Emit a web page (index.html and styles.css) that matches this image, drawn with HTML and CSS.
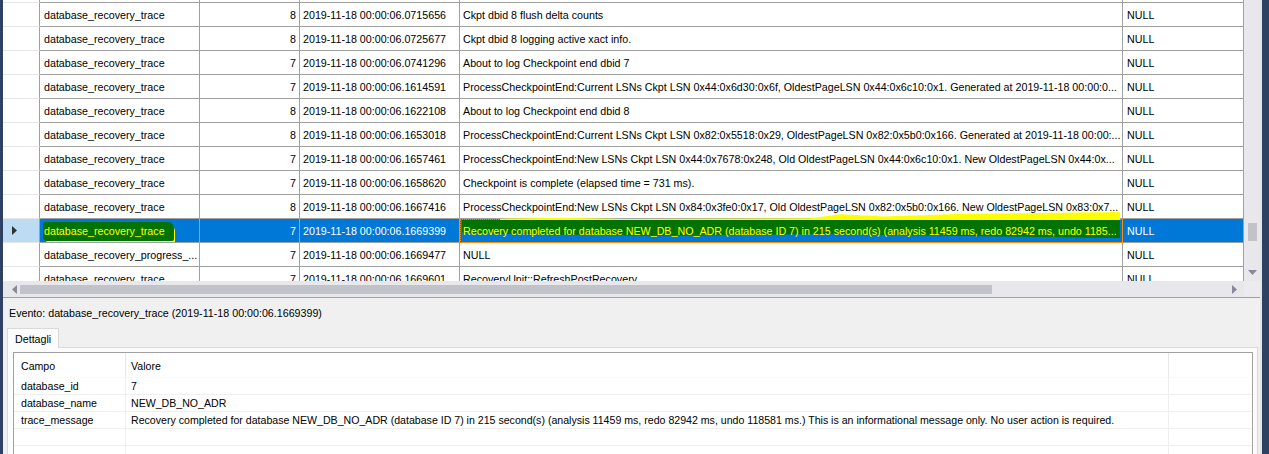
FILE: index.html
```html
<!DOCTYPE html>
<html>
<head>
<meta charset="utf-8">
<link rel="stylesheet" href="styles.css">
</head>
<body>
<div class="screen">
  <div class="edge-l"></div>
  <div class="main">
    <div class="grid-wrap">
      <div class="grid">
        <div class="rows">
          <div class="row"><div class="c rh"></div><div class="c name"></div><div class="c num"></div><div class="c ts"></div><div class="c msg"></div><div class="c nul"></div></div>
          <div class="row"><div class="c rh"></div><div class="c name">database_recovery_trace</div><div class="c num">8</div><div class="c ts">2019-11-18 00:00:06.0715656</div><div class="c msg">Ckpt dbid 8 flush delta counts</div><div class="c nul">NULL</div></div>
          <div class="row"><div class="c rh"></div><div class="c name">database_recovery_trace</div><div class="c num">8</div><div class="c ts">2019-11-18 00:00:06.0725677</div><div class="c msg">Ckpt dbid 8 logging active xact info.</div><div class="c nul">NULL</div></div>
          <div class="row"><div class="c rh"></div><div class="c name">database_recovery_trace</div><div class="c num">7</div><div class="c ts">2019-11-18 00:00:06.0741296</div><div class="c msg">About to log Checkpoint end dbid 7</div><div class="c nul">NULL</div></div>
          <div class="row"><div class="c rh"></div><div class="c name">database_recovery_trace</div><div class="c num">7</div><div class="c ts">2019-11-18 00:00:06.1614591</div><div class="c msg">ProcessCheckpointEnd:Current LSNs Ckpt LSN 0x44:0x6d30:0x6f, OldestPageLSN 0x44:0x6c10:0x1. Generated at 2019-11-18 00:00:0...</div><div class="c nul">NULL</div></div>
          <div class="row"><div class="c rh"></div><div class="c name">database_recovery_trace</div><div class="c num">8</div><div class="c ts">2019-11-18 00:00:06.1622108</div><div class="c msg">About to log Checkpoint end dbid 8</div><div class="c nul">NULL</div></div>
          <div class="row"><div class="c rh"></div><div class="c name">database_recovery_trace</div><div class="c num">8</div><div class="c ts">2019-11-18 00:00:06.1653018</div><div class="c msg">ProcessCheckpointEnd:Current LSNs Ckpt LSN 0x82:0x5518:0x29, OldestPageLSN 0x82:0x5b0:0x166. Generated at 2019-11-18 00:00:...</div><div class="c nul">NULL</div></div>
          <div class="row"><div class="c rh"></div><div class="c name">database_recovery_trace</div><div class="c num">7</div><div class="c ts">2019-11-18 00:00:06.1657461</div><div class="c msg">ProcessCheckpointEnd:New LSNs Ckpt LSN 0x44:0x7678:0x248, Old OldestPageLSN 0x44:0x6c10:0x1. New OldestPageLSN 0x44:0x...</div><div class="c nul">NULL</div></div>
          <div class="row"><div class="c rh"></div><div class="c name">database_recovery_trace</div><div class="c num">7</div><div class="c ts">2019-11-18 00:00:06.1658620</div><div class="c msg">Checkpoint is complete (elapsed time = 731 ms).</div><div class="c nul">NULL</div></div>
          <div class="row"><div class="c rh"></div><div class="c name">database_recovery_trace</div><div class="c num">8</div><div class="c ts">2019-11-18 00:00:06.1667416</div><div class="c msg">ProcessCheckpointEnd:New LSNs Ckpt LSN 0x84:0x3fe0:0x17, Old OldestPageLSN 0x82:0x5b0:0x166. New OldestPageLSN 0x83:0x7...</div><div class="c nul">NULL</div></div>
          <div class="row sel"><div class="c rh"><svg class="arrow" width="6" height="9" viewBox="0 0 6 9"><path d="M0 0 L5 4.5 L0 9 Z" fill="#333"/></svg></div><div class="c name"><span class="hl hl-name">database_recovery_trace</span></div><div class="c num">7</div><div class="c ts">2019-11-18 00:00:06.1669399</div><div class="c msg focus"><span class="streak"></span><span class="hl-msg"></span><span class="hl-text">Recovery completed for database NEW_DB_NO_ADR (database ID 7) in 215 second(s) (analysis 11459 ms, redo 82942 ms, undo 1185...</span></div><div class="c nul">NULL</div></div>
          <div class="row"><div class="c rh"></div><div class="c name">database_recovery_progress_...</div><div class="c num">7</div><div class="c ts">2019-11-18 00:00:06.1669477</div><div class="c msg">NULL</div><div class="c nul">NULL</div></div>
          <div class="row"><div class="c rh"></div><div class="c name">database_recovery_trace</div><div class="c num">7</div><div class="c ts">2019-11-18 00:00:06.1669601</div><div class="c msg">RecoveryUnit::RefreshPostRecovery</div><div class="c nul">NULL</div></div>
        </div>
      </div>
      <div class="vscroll">
        <div class="vthumb"></div>
        <svg class="varrow" width="9" height="5" viewBox="0 0 9 5"><path d="M0 0 L9 0 L4.5 5 Z" fill="#868999"/></svg>
      </div>
    </div>
    <div class="hscroll-row">
      <div class="hscroll">
        <svg class="harrow" width="5" height="9" viewBox="0 0 5 9"><path d="M5 0 L5 9 L0 4.5 Z" fill="#868999"/></svg>
        <div class="htrack"><div class="hthumb"></div></div>
        <svg class="harrow" width="5" height="9" viewBox="0 0 5 9"><path d="M0 0 L0 9 L5 4.5 Z" fill="#868999"/></svg>
      </div>
      <div class="corner"></div>
    </div>
    <div class="details">
      <div class="event">Evento: database_recovery_trace (2019-11-18 00:00:06.1669399)</div>
      <div class="tabs"><div class="tab">Dettagli</div></div>
      <div class="tabpanel">
        <div class="dgrid">
          <div class="drow dhead"><div class="dc d1">Campo</div><div class="dc d2">Valore</div><div class="dc d3"></div></div>
          <div class="drow"><div class="dc d1">database_id</div><div class="dc d2">7</div><div class="dc d3"></div></div>
          <div class="drow"><div class="dc d1">database_name</div><div class="dc d2">NEW_DB_NO_ADR</div><div class="dc d3"></div></div>
          <div class="drow"><div class="dc d1">trace_message</div><div class="dc d2">Recovery completed for database NEW_DB_NO_ADR (database ID 7) in 215 second(s) (analysis 11459 ms, redo 82942 ms, undo 118581 ms.) This is an informational message only. No user action is required.</div><div class="dc d3"></div></div>
          <div class="drow"><div class="dc d1"></div><div class="dc d2"></div><div class="dc d3"></div></div>
          <div class="drow"><div class="dc d1"></div><div class="dc d2"></div><div class="dc d3"></div></div>
        </div>
      </div>
    </div>
  </div>
  <div class="gap"></div>
  <div class="edge-r"></div>
</div>
</body>
</html>
```

FILE: styles.css
```css
html, body {
  margin: 0;
  padding: 0;
  width: 1269px;
  height: 454px;
  overflow: hidden;
  background: #f0f0f0;
  font-family: "Liberation Sans", Arial, sans-serif;
  font-size: 10.7px;
  color: #000;
}

.screen {
  display: flex;
  width: 1269px;
  height: 454px;
}

.edge-l {
  width: 3px;
  background: #2e4163;
  flex: none;
}

.edge-r {
  width: 7px;
  background: #2e4163;
  flex: none;
}

.gap {
  width: 2px;
  background: #e4e4e8;
  flex: none;
}

.main {
  width: 1257px;
  display: flex;
  flex-direction: column;
  flex: none;
}

.grid-wrap {
  height: 281px;
  display: flex;
  flex: none;
}

.grid {
  width: 1241px;
  height: 281px;
  overflow: hidden;
  background: #fff;
}

.rows {
  margin-top: -21px;
}

.row {
  display: grid;
  grid-template-columns: 37px 160px 100px 160px 663px 121px;
  height: 24px;
}

.c {
  box-sizing: border-box;
  height: 24px;
  line-height: 24px;
  border-right: 1px solid #a0a0a0;
  border-bottom: 1px solid #a0a0a0;
  white-space: nowrap;
  overflow: hidden;
  padding-left: 4px;
}

.c.rh {
  border-bottom-color: #e6e6e6;
  padding: 0;
  display: flex;
  align-items: center;
}

.c.name { padding-left: 4px; }
.c.num { text-align: right; padding-right: 3px; padding-left: 0; }
.c.ts { padding-left: 3px; }
.c.msg { padding-left: 3px; }
.c.nul { padding-left: 4px; }

.row.sel .c {
  background: #0078d7;
  color: #fff;
}

.row.sel .c.rh {
  background: #bcdcf4;
}

.arrow {
  margin-left: 9px;
}

.hl {
  position: relative;
  display: inline-block;
  line-height: 19px;
  color: #ffff00;
  background: #007300;
  padding: 0 9px 0 1px;
  margin-left: -1px;
  border-radius: 3px 6px 2px 4px;
  box-shadow: 2px 3px 0 -1px #ffff00;
}

.c.focus {
  position: relative;
  overflow: visible;
  outline: 1px dotted #ff8c00;
  outline-offset: -1px;
}

.hl-msg {
  position: absolute;
  left: 2px;
  top: 1px;
  width: 658px;
  height: 18px;
  background: #007300;
  clip-path: polygon(0 0, 100% 0, 100% 100%, 80% 90%, 55% 78%, 30% 88%, 8% 78%, 0 70%);
}

.streak {
  position: absolute;
  left: 40px;
  top: -8px;
  width: 620px;
  height: 9px;
  background: #ffff00;
  clip-path: polygon(0 85%, 10% 75%, 20% 90%, 50% 80%, 55% 35%, 62% 60%, 75% 30%, 90% 20%, 100% 10%, 100% 100%, 0 100%);
}

.hl-text {
  position: relative;
  display: block;
  width: 656px;
  overflow: hidden;
  color: #ffff00;
}

.vscroll {
  width: 16px;
  height: 281px;
  background: #e8e8ec;
  position: relative;
  display: flex;
  flex-direction: column;
  align-items: center;
}

.vthumb {
  width: 9px;
  height: 18px;
  margin-top: 223px;
  margin-left: 1px;
  background: #c2c3c9;
}

.varrow {
  margin-top: 29px;
}

.hscroll-row {
  display: flex;
  height: 16px;
  border-bottom: 1px solid #a0a0a0;
  flex: none;
}

.hscroll {
  width: 1241px;
  background: #e8e8ec;
  display: flex;
  align-items: center;
  padding: 0 7px 0 9px;
  box-sizing: border-box;
}

.htrack {
  flex: 1;
  display: flex;
  align-items: center;
  height: 16px;
  padding-left: 3px;
}

.hthumb {
  width: 972px;
  height: 9px;
  background: #c2c3c9;
}

.corner {
  width: 16px;
  background: #ebebef;
}

.details {
  flex: 1;
  display: flex;
  flex-direction: column;
  background: #f0f0f0;
}

.event {
  padding: 8px 0 0 6px;
  line-height: 14px;
  height: 14px;
}

.tabs {
  margin-top: 8px;
  padding-left: 4px;
  display: flex;
  position: relative;
  z-index: 1;
}

.tab {
  width: 52px;
  height: 20px;
  line-height: 20px;
  padding-left: 7px;
  box-sizing: border-box;
  border: 1px solid #d9d9d9;
  border-bottom: none;
  background: #fcfcfc;
}

.tabpanel {
  margin-left: 4px;
  width: 1251px;
  box-sizing: border-box;
  flex: 1;
  border: 1px solid #d9d9d9;
  border-bottom: none;
  background: #fcfcfc;
  padding: 4px 4px 0 5px;
  margin-top: -1px;
}

.dgrid {
  border: 1px solid #a0a0a0;
  border-bottom: none;
  background: #fff;
  height: 120px;
  font-size: 10.6px;
}

.drow {
  display: grid;
  grid-template-columns: 112px 1043px 1fr;
  height: 17px;
}

.dc {
  box-sizing: border-box;
  height: 17px;
  padding-top: 1px;
  line-height: 15px;
  border-bottom: 1px solid #efefef;
  border-right: 1px solid #efefef;
  white-space: nowrap;
  overflow: hidden;
}

.dc.d1 { padding-left: 7px; }
.dc.d2 { padding-left: 5px; }
.dc.d3 { border-right: none; }

.drow.dhead {
  height: 25px;
}

.drow.dhead .dc {
  height: 25px;
  padding-top: 0;
  line-height: 27px;
  border-bottom-color: #fafafa;
  border-right-color: #e8e8e8;
}
```
